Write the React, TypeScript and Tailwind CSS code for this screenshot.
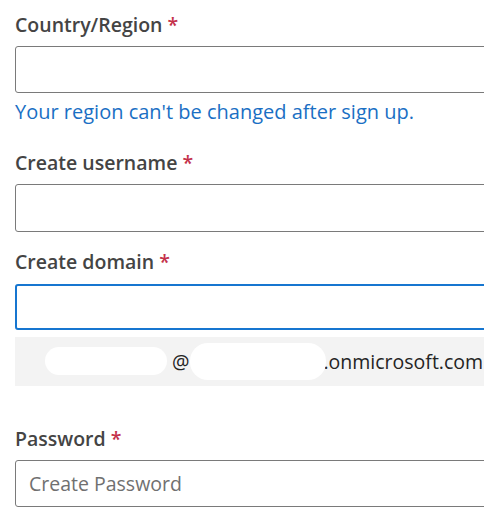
import React from 'react';

const font = { fontFamily: '"Open Sans", "Noto Sans", sans-serif' };

function Label({ text }: { text: string }) {
  return (
    <div className="text-[19.5px] font-semibold leading-6 text-[#444444]">
      {text} <span className="text-[#c4314b]">*</span>
    </div>
  );
}

export default function App() {
  return (
    <div className="h-[516px] w-[484px] overflow-hidden bg-white pl-[15px]" style={font}>
      <div className="w-[520px]">
        <div className="pt-[13px]">
          <Label text="Country/Region" />
        </div>
        <div className="mt-[9px] h-[47px] rounded-[3px] border border-[#7a7a7a] bg-white" />
        <div className="mt-[7px] text-[20px] leading-6 text-[#1a6fc4]">
          Your region can't be changed after sign up.
        </div>

        <div className="mt-[27px]">
          <Label text="Create username" />
        </div>
        <div className="mt-[9px] h-[48px] rounded-[3px] border border-[#7a7a7a] bg-white" />

        <div className="mt-[18px]">
          <Label text="Create domain" />
        </div>
        <div className="mt-[10px] h-[46px] rounded-[3px] border-2 border-[#1676d0] bg-white" />

        <div className="relative mt-[7px] flex h-[49px] items-center bg-[#f3f3f3] text-[19.5px] text-[#242424]">
          <span className="absolute left-[30px] top-[10px] h-[28px] w-[122px] rounded-full bg-white" />
          <span className="pl-[157px]">@</span>
          <span className="absolute left-[175px] top-[6px] h-[37px] w-[136px] rounded-[18px] bg-white" />
          <span className="pl-[134px]">.onmicrosoft.com</span>
        </div>

        <div className="mt-[41px]">
          <Label text="Password" />
        </div>
        <div className="mt-[9px] flex h-[47px] items-center rounded-[3px] border border-[#7a7a7a] bg-white pl-[13px] text-[19.5px] text-[#707070]">
          Create Password
        </div>
      </div>
    </div>
  );
}
